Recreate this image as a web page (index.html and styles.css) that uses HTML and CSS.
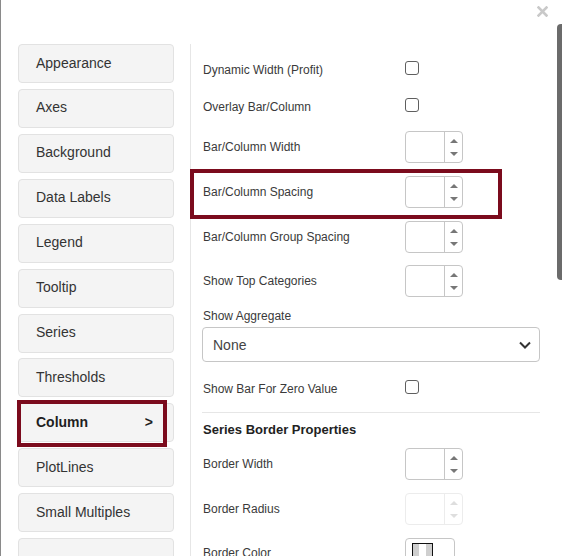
FILE: index.html
```html
<!DOCTYPE html>
<html>
<head>
<meta charset="utf-8">
<link rel="stylesheet" href="styles.css">
</head>
<body>
<div class="dialog">
  <div class="layout">
    <nav class="sidebar">
      <div class="tab">Appearance</div>
      <div class="tab">Axes</div>
      <div class="tab">Background</div>
      <div class="tab">Data Labels</div>
      <div class="tab">Legend</div>
      <div class="tab">Tooltip</div>
      <div class="tab">Series</div>
      <div class="tab">Thresholds</div>
      <div class="tab active"><span>Column</span><span>&gt;</span></div>
      <div class="tab">PlotLines</div>
      <div class="tab">Small Multiples</div>
      <div class="tab"></div>
    </nav>
    <section class="panel">
      <div class="row row-check r1"><span class="label">Dynamic Width (Profit)</span><span class="checkbox"></span></div>
      <div class="row row-check r2"><span class="label">Overlay Bar/Column</span><span class="checkbox"></span></div>
      <div class="row row-spin r3"><span class="label">Bar/Column Width</span><div class="spin"><div class="spin-field"></div><div class="spin-btns"><i class="up"></i><i class="down"></i></div></div></div>
      <div class="row row-spin r4"><span class="label">Bar/Column Spacing</span><div class="spin"><div class="spin-field"></div><div class="spin-btns"><i class="up"></i><i class="down"></i></div></div></div>
      <div class="row row-spin r5"><span class="label">Bar/Column Group Spacing</span><div class="spin"><div class="spin-field"></div><div class="spin-btns"><i class="up"></i><i class="down"></i></div></div></div>
      <div class="row row-spin r6"><span class="label">Show Top Categories</span><div class="spin"><div class="spin-field"></div><div class="spin-btns"><i class="up"></i><i class="down"></i></div></div></div>
      <div class="field-label">Show Aggregate</div>
      <div class="select"><span>None</span><svg width="12" height="8" viewBox="0 0 12 8"><path d="M1 1.5 L6 6.5 L11 1.5" fill="none" stroke="#333" stroke-width="2"/></svg></div>
      <div class="row row-check r8"><span class="label">Show Bar For Zero Value</span><span class="checkbox"></span></div>
      <hr class="sep">
      <h3 class="heading">Series Border Properties</h3>
      <div class="row row-spin r9"><span class="label">Border Width</span><div class="spin"><div class="spin-field"></div><div class="spin-btns"><i class="up"></i><i class="down"></i></div></div></div>
      <div class="row row-spin r10"><span class="label">Border Radius</span><div class="spin disabled"><div class="spin-field"></div><div class="spin-btns"><i class="up"></i><i class="down"></i></div></div></div>
      <div class="row row-color"><span class="label">Border Color</span><div class="swatch"><span class="chip"></span></div></div>
    </section>
  </div>
</div>
<svg class="close" width="11" height="11" viewBox="0 0 11 11"><path d="M1.5 1.5 L9.5 9.5 M9.5 1.5 L1.5 9.5" stroke="#c9c9c9" stroke-width="2.6" stroke-linecap="square"/></svg>
<div class="scrollbar"></div>
<div class="highlight hl-tab"></div>
<div class="highlight hl-row"></div>
</body>
</html>
```

FILE: styles.css
```css
html, body {
  margin: 0;
  padding: 0;
  background: #fff;
}
body {
  position: relative;
  width: 562px;
  height: 556px;
  overflow: hidden;
  font-family: "Liberation Sans", Arial, sans-serif;
}
.dialog {
  height: 556px;
  border-left: 1px solid #8a8a8a;
  box-sizing: border-box;
}
.layout {
  display: flex;
  padding-top: 44px;
  height: 100%;
  box-sizing: border-box;
}
.sidebar {
  width: 156px;
  margin-left: 17px;
  margin-right: 16px;
  display: flex;
  flex-direction: column;
  gap: 5.93px;
  flex-shrink: 0;
}
.tab {
  height: 39px;
  flex-shrink: 0;
  box-sizing: border-box;
  background: #f4f4f4;
  border: 1px solid #e2e2e2;
  border-radius: 4px;
  padding: 0 20px 2px 17px;
  display: flex;
  align-items: center;
  justify-content: space-between;
  font-size: 14px;
  color: #333;
}
.tab.active {
  font-weight: bold;
  color: #1f1f1f;
}
.panel {
  flex: 1;
  border-left: 1px solid #e6e6e6;
  padding-left: 11px;
  padding-right: 22px;
  display: flex;
  flex-direction: column;
}
.row {
  display: flex;
  align-items: center;
  flex-shrink: 0;
}
.label {
  width: 203px;
  box-sizing: border-box;
  flex-shrink: 0;
  font-size: 12px;
  line-height: 14px;
  color: #3a3a3a;
  padding-left: 1px;
}
.row-check { height: 20px; }
.row-spin { height: 32px; }
.r1 { margin-top: 16px; }
.r2 { margin-top: 17px; }
.r3 { margin-top: 14px; }
.r4 { margin-top: 13px; }
.r5 { margin-top: 13px; }
.r6 { margin-top: 12px; }
.r8 { margin-top: 17px; }
.r9 { margin-top: 10px; }
.r10 { margin-top: 13px; }
.checkbox {
  width: 14px;
  height: 14px;
  box-sizing: border-box;
  border: 1px solid #5f5f5f;
  border-radius: 3px;
  background: #fff;
  margin-bottom: 5px;
}
.spin {
  width: 58px;
  height: 32px;
  box-sizing: border-box;
  border: 1px solid #c6c6c6;
  border-radius: 4px;
  display: flex;
}
.spin-field {
  width: 38px;
  border-right: 1px solid #c6c6c6;
}
.spin-btns {
  flex: 1;
  display: flex;
  flex-direction: column;
  align-items: center;
  justify-content: space-between;
  padding: 7px 0 6px;
}
.up, .down {
  width: 0;
  height: 0;
  border-left: 4px solid transparent;
  border-right: 4px solid transparent;
}
.up { border-bottom: 4px solid #777; }
.down { border-top: 4px solid #777; }
.spin.disabled { border-color: #ececec; }
.spin.disabled .spin-field { border-right-color: #ececec; }
.spin.disabled .up { border-bottom-color: #dedede; }
.spin.disabled .down { border-top-color: #dedede; }
.field-label {
  margin-top: 12px;
  font-size: 12px;
  line-height: 14px;
  color: #3a3a3a;
  padding-left: 1px;
}
.select {
  margin-top: 4px;
  height: 35px;
  box-sizing: border-box;
  border: 1px solid #c6c6c6;
  border-radius: 4px;
  display: flex;
  align-items: center;
  justify-content: space-between;
  padding: 0 8px 0 10px;
  font-size: 14px;
  color: #444;
  flex-shrink: 0;
}
.select svg { display: block; }
.sep {
  margin: 13px 0 0;
  border: 0;
  border-top: 1px solid #e6e6e6;
  height: 0;
  flex-shrink: 0;
}
.heading {
  margin: 9px 0 0;
  font-size: 13px;
  line-height: 16px;
  font-weight: bold;
  color: #222;
  padding-left: 1px;
}
.row-color {
  height: 30px;
  margin-top: 13px;
}
.swatch {
  width: 50px;
  height: 30px;
  box-sizing: border-box;
  border: 1px solid #c6c6c6;
  border-radius: 4px;
  padding: 4px 0 0 6px;
}
.chip {
  display: block;
  width: 21px;
  height: 21px;
  box-sizing: border-box;
  border: 1px solid #111;
  background:
    linear-gradient(90deg, #cfcfcf 0 33%, #fff 33% 66%, #cfcfcf 66% 100%);
}
.close {
  position: absolute;
  left: 537px;
  top: 6px;
}
.scrollbar {
  position: absolute;
  left: 557px;
  top: 24px;
  width: 8px;
  height: 256px;
  border-radius: 4px;
  background: #6b6b6b;
}
.highlight {
  position: absolute;
  box-sizing: border-box;
  border: 4px solid #7b0b1d;
}
.hl-tab {
  left: 17px;
  top: 400px;
  width: 150px;
  height: 47px;
}
.hl-row {
  left: 190px;
  top: 169px;
  width: 312px;
  height: 50px;
}
```
